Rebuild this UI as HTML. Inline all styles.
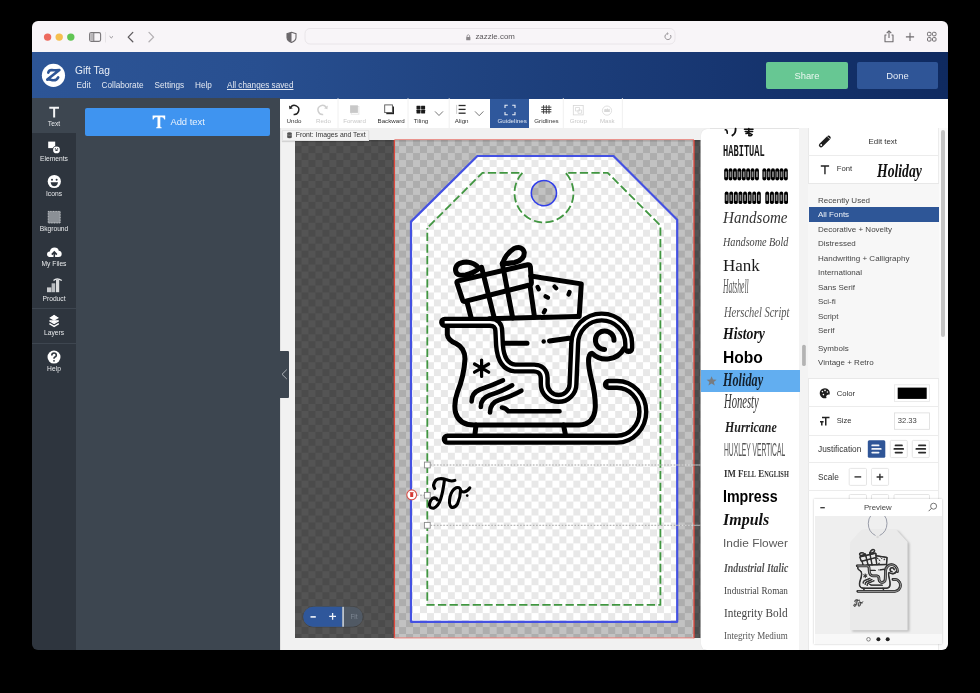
<!DOCTYPE html>
<html><head><meta charset="utf-8">
<style>
*{margin:0;padding:0;box-sizing:border-box}
html,body{width:980px;height:693px;overflow:hidden;background:#000;font-family:"Liberation Sans",sans-serif}
.a{position:absolute}
#win{position:absolute;left:0;top:0;width:980px;height:693px;clip-path:inset(21px 32px 43px 32px round 6px);background:#fff;will-change:transform}
.t{position:absolute;white-space:nowrap;line-height:1}
.sl{color:#e8eaec;font-size:6.7px;text-align:center;width:44px;left:32px}
.tbl{position:absolute;font-size:6.2px;color:#333;text-align:center;white-space:nowrap;line-height:1}
.dis{color:#c8c8c8}
.fi{position:absolute;left:723px;white-space:nowrap;color:#111;line-height:1}
.cat{position:absolute;left:818px;font-size:8px;color:#454545;white-space:nowrap;line-height:1}
</style></head><body>
<div id="win">
  <!-- title bar -->
  <div class="a" style="left:32px;top:21px;width:916px;height:31px;background:#f8f5f8"></div>

  <!-- titlebar contents -->
  <svg class="a" style="left:0;top:0" width="980" height="60" viewBox="0 0 980 60">
    <circle cx="47.6" cy="37.1" r="3.7" fill="#ed6a5e"/>
    <circle cx="59.2" cy="37.1" r="3.7" fill="#f5bf4f"/>
    <circle cx="70.8" cy="37.1" r="3.7" fill="#61c554"/>
    <rect x="89.6" y="32.6" width="11" height="8.8" rx="1.6" fill="none" stroke="#7a777a" stroke-width="1.1"/>
    <rect x="90.2" y="33.2" width="3.2" height="7.6" fill="#b9b6b9"/>
    <line x1="93.8" y1="32.6" x2="93.8" y2="41.4" stroke="#7a777a" stroke-width="1"/>
    <line x1="105.5" y1="32" x2="105.5" y2="42.5" stroke="#e2dfe2" stroke-width="0.8"/>
    <path d="M109.6 36.3 L111.3 37.9 L113 36.3" fill="none" stroke="#8a878a" stroke-width="0.9"/>
    <path d="M132.8 32.4 L128.2 37.1 L132.8 41.8" fill="none" stroke="#5e5b5e" stroke-width="1.3" stroke-linecap="round" stroke-linejoin="round"/>
    <path d="M149 32.4 L153.6 37.1 L149 41.8" fill="none" stroke="#b3b0b3" stroke-width="1.3" stroke-linecap="round" stroke-linejoin="round"/>
    <path d="M291.5 32.3 L296 33.7 L296 37.5 Q296 40.8 291.5 42.5 Q287 40.8 287 37.5 L287 33.7 Z" fill="none" stroke="#6c696c" stroke-width="1.1"/>
    <path d="M291.5 32.3 L287 33.7 L287 37.5 Q287 40.8 291.5 42.5 Z" fill="#6c696c"/>
    <rect x="305" y="28.5" width="370" height="15.5" rx="5" fill="#f8f5f8" stroke="#e4e1e4" stroke-width="0.8"/>
    <rect x="466.2" y="37" width="4.2" height="3.2" rx="0.5" fill="#8a878a"/>
    <path d="M467 37 L467 35.6 Q468.3 33.8 469.6 35.6 L469.6 37" fill="none" stroke="#8a878a" stroke-width="0.8"/>
    <path d="M670.5 35 A3 3 0 1 1 667.6 33.6" fill="none" stroke="#8a878a" stroke-width="0.9"/>
    <path d="M667 32.6 L668.2 33.6 L667 34.8" fill="none" stroke="#8a878a" stroke-width="0.8"/>
    <path d="M886.5 35 L885 35 L885 41.8 L893 41.8 L893 35 L891.5 35" fill="none" stroke="#6e6b6e" stroke-width="1.1" stroke-linejoin="round"/>
    <line x1="889" y1="31" x2="889" y2="38" stroke="#6e6b6e" stroke-width="1.1"/>
    <path d="M886.7 33.2 L889 30.9 L891.3 33.2" fill="none" stroke="#6e6b6e" stroke-width="1.1" stroke-linejoin="round"/>
    <path d="M905.9 36.9 H914.1 M910 32.8 V41" stroke="#6e6b6e" stroke-width="1.1"/>
    <rect x="927.5" y="32.3" width="3.5" height="3.5" rx="1" fill="none" stroke="#6e6b6e" stroke-width="1"/>
    <rect x="932.5" y="32.3" width="3.5" height="3.5" rx="1" fill="none" stroke="#6e6b6e" stroke-width="1"/>
    <rect x="927.5" y="37.6" width="3.5" height="3.5" rx="1" fill="none" stroke="#6e6b6e" stroke-width="1"/>
    <rect x="932.5" y="37.6" width="3.5" height="3.5" rx="1" fill="none" stroke="#6e6b6e" stroke-width="1"/>
  </svg>
  <div class="t" style="left:475.4px;top:33.2px;font-size:7.9px;color:#5a575a">zazzle.com</div>
  <!-- header -->
  <div class="a" style="left:32px;top:52px;width:916px;height:47px;background:linear-gradient(90deg,#2d5596 0%,#284f90 25%,#1f427f 50%,#173671 75%,#0f2a60 100%)"></div>

  <!-- header contents -->
  <svg class="a" style="left:0;top:0" width="100" height="100" viewBox="0 0 100 100">
    <circle cx="53.45" cy="75.35" r="11.6" fill="#fff"/>
    <path d="M48.3 72.6 Q48.6 70.2 51.8 70 Q55 70.3 59.4 70.1 L47.3 79.6 Q50 79.2 52.5 80.2 Q56.5 80.8 58.2 77.4" fill="none" stroke="#2d5596" stroke-width="2.6" stroke-linecap="round" stroke-linejoin="round"/>
  </svg>
  <div class="t" style="left:75px;top:65.5px;font-size:10.2px;color:#e9eef6">Gift Tag</div>
  <div class="t" style="left:76.6px;top:82px;font-size:8.2px;color:#e4e9f2">Edit</div>
  <div class="t" style="left:101.6px;top:82px;font-size:8.2px;color:#e4e9f2">Collaborate</div>
  <div class="t" style="left:154.6px;top:82px;font-size:8.2px;color:#e4e9f2">Settings</div>
  <div class="t" style="left:195px;top:82px;font-size:8.2px;color:#e4e9f2">Help</div>
  <div class="t" style="left:227px;top:82px;font-size:8.2px;color:#e4e9f2;text-decoration:underline">All changes saved</div>
  <div class="a" style="left:766.3px;top:61.6px;width:81.3px;height:27.7px;background:#67c793;border-radius:2px"></div>
  <div class="t" style="left:766.3px;top:70.5px;width:81.3px;text-align:center;font-size:9.4px;color:#eaf7ef">Share</div>
  <div class="a" style="left:857px;top:61.6px;width:81px;height:27.7px;background:#2f5597;border-radius:2px"></div>
  <div class="t" style="left:857px;top:70.5px;width:81px;text-align:center;font-size:9.4px;color:#e6ecf5">Done</div>
  <!-- sidebar -->
  <div class="a" style="left:32px;top:98px;width:44px;height:552px;background:#2e353e"></div>
  <div class="a" style="left:32px;top:98px;width:44px;height:35px;background:#3d4650"></div>
  <div class="a" style="left:32px;top:308px;width:44px;height:1px;background:#3e4650"></div>
  <div class="a" style="left:32px;top:343px;width:44px;height:1px;background:#3e4650"></div>
  <!-- left panel -->
  <div class="a" style="left:76px;top:98px;width:204px;height:552px;background:#3d4650"></div>

  <!-- sidebar icons -->
  <svg class="a" style="left:0;top:0" width="80" height="380" viewBox="0 0 80 380">
    <path d="M49.3 107.7 H59 M54.15 107.7 V117.5" stroke="#f4f5f6" stroke-width="2" fill="none"/>
    <rect x="48.2" y="141.6" width="7" height="6.5" fill="#fff"/>
    <circle cx="56.5" cy="149.9" r="4.2" fill="#2e353e"/>
    <circle cx="56.5" cy="149.9" r="3.4" fill="#fff"/>
    <path d="M54.6 149.6 Q56.5 152.6 58.4 149.6 Z" fill="#2e353e"/>
    <circle cx="55.3" cy="148.6" r="0.5" fill="#2e353e"/><circle cx="57.7" cy="148.6" r="0.5" fill="#2e353e"/>
    <circle cx="54.3" cy="181.5" r="6.6" fill="#fff"/>
    <circle cx="52" cy="179.8" r="1" fill="#2e353e"/><circle cx="56.6" cy="179.8" r="1" fill="#2e353e"/>
    <path d="M50.6 182.2 H58 Q57.4 186.3 54.3 186.3 Q51.2 186.3 50.6 182.2 Z" fill="#2e353e"/>
    <rect x="48.2" y="211.4" width="12" height="11.6" fill="#8b9096" stroke="#d6d8da" stroke-width="0.8" stroke-dasharray="1 0.6"/>
    <path d="M50.5 257 Q47 257 47 254.2 Q47 251.6 49.8 251.4 Q50.6 247.6 54.6 247.6 Q58 247.6 58.8 250.8 Q61.7 251 61.7 254 Q61.7 257 58.6 257 Z" fill="#fff"/>
    <path d="M54.3 257.5 V252.3 M51.8 254.6 L54.3 252 L56.8 254.6" stroke="#2e353e" stroke-width="1.6" fill="none"/>
    <path d="M53.5 280.5 Q57 277.6 61.8 280.5" stroke="#e6e8ea" stroke-width="1.4" fill="none"/>
    <rect x="56" y="280" width="3.2" height="12.2" fill="#d8dadc"/>
    <rect x="51.6" y="283.3" width="3.6" height="8.9" fill="#b8bcc0"/>
    <rect x="47" y="287.4" width="4.4" height="4.8" fill="#c8cbce"/>
    <path d="M49.4 318 L58.8 318 L54.1 314.8 Z M49.2 320.3 L54.1 323.2 L59 320.3" fill="#fff"/>
    <path d="M49.4 318 L54.1 315.2 L58.8 318 L54.1 320.8 Z" fill="#fff"/>
    <path d="M49.4 320.8 L54.1 323.6 L58.8 320.8" stroke="#fff" stroke-width="1.3" fill="none"/>
    <path d="M49.4 323.6 L54.1 326.4 L58.8 323.6" stroke="#fff" stroke-width="1.3" fill="none"/>
    <circle cx="54" cy="357.1" r="6.5" fill="#fff"/>
    <path d="M51.8 355.5 Q51.8 353 54 353 Q56.3 353 56.3 355.2 Q56.3 356.7 54.6 357.3 Q54 357.6 54 358.8" stroke="#2e353e" stroke-width="1.6" fill="none"/>
    <circle cx="54" cy="360.8" r="0.9" fill="#2e353e"/>
  </svg>
  <div class="t sl" style="top:121px">Text</div>
  <div class="t sl" style="top:156px">Elements</div>
  <div class="t sl" style="top:190.6px">Icons</div>
  <div class="t sl" style="top:225.5px">Bkground</div>
  <div class="t sl" style="top:260.6px">My Files</div>
  <div class="t sl" style="top:295.6px">Product</div>
  <div class="t sl" style="top:330.2px">Layers</div>
  <div class="t sl" style="top:365.5px">Help</div>
  <!-- add text button -->
  <div class="a" style="left:85.4px;top:108px;width:185px;height:27.8px;background:#3f94f0;border-radius:2px"></div>
  <svg class="a" style="left:0;top:0" width="300" height="140" viewBox="0 0 300 140">
    <path d="M152.6 115.6 H165.2 V119.4 H164.2 Q163.8 117.3 161.8 117.3 H160.3 V126.4 Q160.3 127.2 161.6 127.3 V128.3 H156.2 V127.3 Q157.5 127.2 157.5 126.4 V117.3 H156 Q154 117.3 153.6 119.4 H152.6 Z" fill="#fff"/>
  </svg>
  <div class="t" style="left:170.4px;top:117px;font-size:9.4px;color:#eaf3fd">Add text</div>
  <!-- toolbar -->
  <div class="a" style="left:280px;top:98.5px;width:668px;height:30px;background:#fff;border-bottom:1px solid #e6e6e6"></div>

  <!-- toolbar contents -->
  <div class="a" style="left:490px;top:98.5px;width:39px;height:29.3px;background:#2f589c"></div>
  <svg class="a" style="left:0;top:0" width="700" height="130" viewBox="0 0 700 130">
    <g stroke="#ececec" stroke-width="0.8"><line x1="338" y1="98" x2="338" y2="128"/><line x1="408" y1="98" x2="408" y2="128"/><line x1="449.2" y1="98" x2="449.2" y2="128"/><line x1="563.3" y1="98" x2="563.3" y2="128"/><line x1="622.4" y1="98" x2="622.4" y2="128"/></g>
    <path d="M290.6 107.4 A4.5 4.5 0 1 1 293.6 114.4" fill="none" stroke="#222" stroke-width="1.5"/>
    <path d="M289 105.6 L289.4 109.2 L292.8 108.2 Z" fill="#222"/>
    <path d="M326.2 107.4 A4.5 4.5 0 1 0 323.2 114.4" fill="none" stroke="#cfcfcf" stroke-width="1.5"/>
    <path d="M327.8 105.6 L327.4 109.2 L324 108.2 Z" fill="#cfcfcf"/>
    <rect x="351.2" y="106.5" width="7.7" height="7.7" fill="none" stroke="#e4e4e4" stroke-width="0.9"/>
    <rect x="350.1" y="105.3" width="7.8" height="7.6" fill="#c8c8c8"/>
    <rect x="386.3" y="106.5" width="7.7" height="7.7" fill="#222"/>
    <rect x="384.7" y="104.9" width="7.7" height="7.7" fill="#fff" stroke="#555" stroke-width="0.9"/>
    <rect x="416.5" y="105.7" width="4" height="3.7" rx="0.4" fill="#1a1a1a"/><rect x="421.1" y="105.7" width="4" height="3.7" rx="0.4" fill="#1a1a1a"/>
    <rect x="416.5" y="109.8" width="4" height="3.7" rx="0.4" fill="#1a1a1a"/><rect x="421.1" y="109.8" width="4" height="3.7" rx="0.4" fill="#1a1a1a"/>
    <path d="M435 111.4 L439 115.5 L443 111.4" fill="none" stroke="#666" stroke-width="0.9"/>
    <line x1="456.6" y1="104.9" x2="456.6" y2="113.9" stroke="#bbb" stroke-width="0.7"/>
    <g stroke="#2a2a2a" stroke-width="1.3"><line x1="458.6" y1="105.5" x2="465.6" y2="105.5"/><line x1="458.6" y1="109.4" x2="465.6" y2="109.4"/><line x1="458.6" y1="113.2" x2="465.6" y2="113.2"/></g>
    <path d="M475 111.4 L479.2 115.7 L483.4 111.4" fill="none" stroke="#666" stroke-width="0.9"/>
    <path d="M505 108 V105.2 H507.8 M512.2 105.2 H515 V108 M515 112 V114.8 H512.2 M507.8 114.8 H505 V112" fill="none" stroke="#e9eef6" stroke-width="1.1"/>
    <g stroke="#333" stroke-width="0.9"><line x1="543.6" y1="105.1" x2="543.6" y2="113.8"/><line x1="546.3" y1="105.1" x2="546.3" y2="113.8"/><line x1="549" y1="105.1" x2="549" y2="113.8"/><line x1="541.2" y1="107.2" x2="551.4" y2="107.2"/><line x1="541.2" y1="109.5" x2="551.4" y2="109.5"/><line x1="541.2" y1="111.8" x2="551.4" y2="111.8"/></g>
    <rect x="573.3" y="105.5" width="9.9" height="9.4" fill="none" stroke="#d6d6d6" stroke-width="0.8"/>
    <path d="M575.5 107.5 H579.5 V111 H575.5 Z M578 110 H581.5 V113.3 H578 Z" fill="none" stroke="#d6d6d6" stroke-width="0.7"/>
    <circle cx="607" cy="110.6" r="4.6" fill="none" stroke="#d8d8d8" stroke-width="0.8"/>
    <path d="M604.2 112 V109.6 L605.3 108.7 L606.2 109.6 L607.3 108.3 L608.6 109.6 L609.8 108.8 V112 Z" fill="#d8d8d8"/>
  </svg>
  <div class="tbl" style="left:282px;top:118px;width:24px">Undo</div>
  <div class="tbl dis" style="left:311.5px;top:118px;width:24px">Redo</div>
  <div class="tbl dis" style="left:342.5px;top:118px;width:24px">Forward</div>
  <div class="tbl" style="left:377.5px;top:118px;width:24px">Backward</div>
  <div class="tbl" style="left:409px;top:118px;width:24px">Tiling</div>
  <div class="tbl" style="left:449.7px;top:118px;width:24px">Align</div>
  <div class="tbl" style="left:497.5px;top:118px;width:24px;color:#e6ecf5">Guidelines</div>
  <div class="tbl" style="left:534.3px;top:118px;width:24px">Gridlines</div>
  <div class="tbl dis" style="left:566.3px;top:118px;width:24px">Group</div>
  <div class="tbl dis" style="left:595.3px;top:118px;width:24px">Mask</div>
  <!-- gray strip around canvas -->
  <div class="a" style="left:280px;top:128px;width:430px;height:522px;background:#f1f1f1"></div>
  <div class="a" style="left:280px;top:128px;width:1px;height:522px;background:#e2e2e2"></div>

  <!-- canvas -->
  <svg class="a" style="left:0;top:0" width="980" height="693" viewBox="0 0 980 693">
    <defs>
      <pattern id="ckd" x="1.81" y="-0.27" width="13.94" height="13.94" patternUnits="userSpaceOnUse"><rect width="13.94" height="13.94" fill="#545454"/><rect x="6.97" width="6.97" height="6.97" fill="#4b4b4b"/><rect y="6.97" width="6.97" height="6.97" fill="#4b4b4b"/></pattern>
      <pattern id="ckm" x="1.81" y="-0.27" width="13.94" height="13.94" patternUnits="userSpaceOnUse"><rect width="13.94" height="13.94" fill="#c2c2c2"/><rect x="6.97" width="6.97" height="6.97" fill="#adadad"/><rect y="6.97" width="6.97" height="6.97" fill="#adadad"/></pattern>
      <pattern id="ckl" x="1.81" y="-0.27" width="13.94" height="13.94" patternUnits="userSpaceOnUse"><rect width="13.94" height="13.94" fill="#ffffff"/><rect x="6.97" width="6.97" height="6.97" fill="#e8e8e8"/><rect y="6.97" width="6.97" height="6.97" fill="#e8e8e8"/></pattern>
    </defs>
    <rect x="295" y="140" width="405.5" height="498" fill="url(#ckd)"/>
    <rect x="394.4" y="140" width="299.6" height="498" fill="url(#ckm)"/>
    <rect x="295" y="140" width="405.5" height="1.6" fill="#000" opacity="0.13"/>
    <path d="M394.4 140 V638.2 M694 140 V638.2" fill="none" stroke="#e0483c" stroke-width="1.3"/>
    <line x1="394.4" y1="637.9" x2="694" y2="637.9" stroke="#e8837c" stroke-width="1"/>
    <line x1="394.4" y1="139.6" x2="694" y2="139.6" stroke="#e88a84" stroke-width="1"/>
    <polygon points="477.4,156 613.5,156 677.2,219.7 677.2,621.8 411,621.8 411,221.6" fill="url(#ckl)" stroke="#4451e2" stroke-width="2.2" stroke-linejoin="round"/>
    <circle cx="543.9" cy="193.1" r="12.6" fill="url(#ckm)" stroke="#3340e8" stroke-width="1.6"/>
    <path d="M427.3 227.9 L482.4 172.8 H522.5 A29.5 29.5 0 1 0 565.5 172.8 H607.7 L660.4 225.5 V604.9 H427.3 Z" fill="none" stroke="#419641" stroke-width="1.8" stroke-dasharray="8.3 3.3" stroke-dashoffset="-2.2"/>
    <g id="art">
    <!-- sleigh -->
    <g fill="none" stroke="#000" stroke-width="5" stroke-linecap="round" stroke-linejoin="round">
      <!-- second box -->
      <path d="M530.8 276 L581.3 283.9 L579.2 316.4"/>
      <!-- gift lid -->
      <path d="M458.4 280.9 L527.7 264.7 Q530 264.5 530.4 267 L531.4 282.5 Q531.5 284.5 529.5 285 L465 301.3 Q463 301.7 462.5 299.7 L457 283 Q456.5 281.3 458.4 280.9 Z" fill="#fff" fill-opacity="0"/>
      <path d="M467 302 L471.2 318 M530 285.5 L534.5 317 M481.6 267.3 L494.5 319 M502.3 263.4 L512.7 318"/>
      <!-- bow -->
      <path d="M479 268.5 Q475 262.5 466.5 262 Q455.5 262.5 455.5 270 Q456 276.5 465.5 275 Q473 273.5 479 268.5"/>
      <path d="M502.3 264 Q505.5 254 514 248.5 Q522.5 245.5 524.3 252.5 Q524.5 260 514.5 262.5 Q508 263.5 502.3 264"/>
      <!-- dots -->
      <path d="M537.6 287 L538.7 289.3 M554.6 286.6 L556.2 288.3 M569.5 292 L568.6 294.5 M545.6 296.3 L547.9 297.6 M545 310.2 L543.9 312.4" stroke-width="4.3"/>
      <!-- rim line -->
      <path d="M489 318.8 L577.7 316.4"/>
      <!-- body outline -->
      <path d="M447.3 327 V334.5 Q447.8 340 456 343.5 Q465 348 465 359 Q464 376 457.5 392 Q453.5 403 455.5 412.5 Q459 425 474 425 H579 Q594.5 424.5 595.3 407 Q595.5 395 591.6 380 Q587.6 364 588.8 357.5 Q589.8 353.2 592 353.2 A20.3 20.3 0 0 0 624 348.5"/>
      <!-- legs -->
      <path d="M476 425 L475 434 M563.5 425 L565.3 434"/>
      <!-- curl -->
      <path d="M614 340.2 A9.3 9.3 0 1 0 604.6 349.5"/>
      <!-- dash + dot -->
      <path d="M503.9 343.3 H527 M549.5 341 L569 338.2"/>
      <circle cx="543.7" cy="341.5" r="2.2" fill="#000" stroke="none"/>
      <!-- asterisk -->
      <path d="M481.6 360 V376.4 M474.5 364 L488.7 372.2 M474.5 372.2 L488.7 364" stroke-width="3.2"/>
      <!-- swooshes -->
      <path d="M471.6 401.5 Q471.5 393 480 389.5 Q492 385.5 503 380.4 M480.8 407 Q480.5 398.5 490 395 Q503 391 512.2 385.3 M490 412.4 Q490 403 499 400 Q512 396 521.4 390.7" stroke-width="4.6"/>
      <!-- bottom inner line -->
      <path d="M502 407.5 Q506 408 508.4 411.3 H559.5" stroke-width="4.6"/>
    </g>
    <g fill="none" stroke-linecap="round" stroke-linejoin="round">
      <path id="runner" d="M447.3 439.2 H617 A25.8 27.4 0 0 0 642.8 411.8 A25.8 27.4 0 0 0 617 384.4 H608.5" stroke="#000" stroke-width="11.2"/>
      <path d="M447.3 439.2 H617 A25.8 27.4 0 0 0 642.8 411.8 A25.8 27.4 0 0 0 617 384.4 H608.5" stroke="#fff" stroke-width="2.4" stroke-linecap="butt"/>
      <path d="M444.7 322.3 H490 Q498.5 322.3 498.8 331 L499.5 345 Q501 366.5 515 368 H534 Q543.8 368.5 544.2 378 V384 A14.4 14.4 0 0 0 573 384 L574.7 344 A27 27 0 0 1 628.7 344 V348.5" stroke="#000" stroke-width="11.2"/>
      <path d="M444.7 322.3 H490 Q498.5 322.3 498.8 331 L499.5 345 Q501 366.5 515 368 H534 Q543.8 368.5 544.2 378 V384 A14.4 14.4 0 0 0 573 384 L574.7 344 A27 27 0 0 1 628.7 344 V348.5" stroke="#fff" stroke-width="2.4" stroke-linecap="butt"/>
    </g>

    <g fill="none" stroke="#000" stroke-width="3.1" stroke-linecap="round" stroke-linejoin="round">
      <path d="M434.7 488.5 Q432 485 436 480 Q440 477.5 446.4 479.7 Q451 481.8 454.9 480.4"/>
      <path d="M444.5 479.5 Q443 492 440.6 499.2 Q438.5 506 433.4 508.3 Q429 508.5 429.5 504 Q430.5 498.5 434.1 497.9 Q436.5 498 437.3 499.9"/>
      <path d="M460.6 490 Q459.5 486.5 456 487.8 Q451.5 490 450 497 Q448.5 504 451 507 Q454.5 508.5 457.5 503.8 Q460.5 497 460.6 490 Q461 491.8 464 492 Q467.5 491.5 469.8 487.9"/>
    </g>
    <circle cx="467.2" cy="495.6" r="1.3" fill="#000"/>
    </g>
    <!-- text box selection -->
    <g stroke="#f4f4f4" stroke-width="0.9" fill="none" opacity="0.7"><line x1="430.5" y1="465" x2="701" y2="465"/><line x1="430.5" y1="525.3" x2="701" y2="525.3"/></g>
    <g stroke="#9a9a9a" stroke-width="0.9" stroke-dasharray="1.6 1.6" fill="none">
      <line x1="430.5" y1="465" x2="701" y2="465"/>
      <line x1="430.5" y1="525.3" x2="701" y2="525.3"/>
      <line x1="417" y1="495.2" x2="424.5" y2="495.2"/>
    </g>
    <g fill="#fff" stroke="#8a8a8a" stroke-width="0.9">
      <rect x="424.4" y="462.1" width="5.8" height="5.8"/>
      <rect x="424.4" y="492.4" width="5.8" height="5.8"/>
      <rect x="424.4" y="522.4" width="5.8" height="5.8"/>
    </g>
    <circle cx="411.7" cy="494.8" r="4.9" fill="#fff" stroke="#d9504a" stroke-width="1.1"/>
    <rect x="410.2" y="492.9" width="3" height="4" rx="0.5" fill="#d43a33"/>
    <rect x="409.8" y="492.2" width="3.8" height="0.8" fill="#d43a33"/>
    <!-- zoom control -->
    <rect x="302.7" y="606.5" width="60.6" height="21" rx="10.5" fill="#000" opacity="0.15"/><rect x="303.2" y="606.8" width="59.6" height="20" rx="10" fill="#525c68" opacity="0.9"/>
    <path d="M313.2 606.8 H342.3 V626.8 H313.2 A10 10 0 0 1 313.2 606.8 Z" fill="#2f579b"/>
    <rect x="342.3" y="606.8" width="1.6" height="20" fill="#c8cfd8"/>
    <path d="M310.5 616.9 H315.8" stroke="#f2f5fa" stroke-width="1.6"/>
    <path d="M329.2 616.4 H336 M332.6 613 V619.8" stroke="#f2f5fa" stroke-width="1.3"/>
  </svg>
  <div class="t" style="left:350.4px;top:613.5px;font-size:6.5px;color:#7d8692">Fit</div>
  <!-- front label -->
  <div class="a" style="left:282px;top:129.7px;width:86.8px;height:11.2px;background:#f3f3f3;border:1px solid #e3e3e3;box-shadow:0 1px 1px rgba(0,0,0,0.12)"></div>
  <svg class="a" style="left:0;top:0" width="300" height="150" viewBox="0 0 300 150">
    <ellipse cx="289.5" cy="133.2" rx="2.3" ry="1" fill="#555"/>
    <rect x="287.2" y="133.2" width="4.6" height="4" fill="#555"/>
    <ellipse cx="289.5" cy="137.2" rx="2.3" ry="1" fill="#555"/>
    <path d="M287.2 134.8 Q289.5 136 291.8 134.8" stroke="#bbb" stroke-width="0.4" fill="none"/>
  </svg>
  <div class="t" style="left:295.8px;top:131.8px;font-size:6.85px;color:#333">Front: Images and Text</div>

  <div class="a" style="left:279px;top:351.3px;width:10px;height:46.4px;background:#3d4650;border-radius:0 1px 1px 0"></div>
  <svg class="a" style="left:0;top:0" width="300" height="400" viewBox="0 0 300 400"><path d="M286.8 369.6 L282 374.3 L286.8 379" fill="none" stroke="#b5bac0" stroke-width="0.9"/></svg>
  <!-- font list panel -->
  <div class="a" style="left:701px;top:128.5px;width:98px;height:521.5px;background:#fff;border-radius:6px 0 0 6px;box-shadow:0 0 1px rgba(0,0,0,0.15)"></div>
  <div class="a" style="left:799px;top:128px;width:9px;height:522px;background:#f3f3f3"></div>

  <!-- font list contents -->
  <div class="a" style="left:701px;top:369.6px;width:98.5px;height:22.8px;background:#62aef0"></div>
  <svg class="a" style="left:0;top:0" width="980" height="693" viewBox="0 0 980 693">
    <path d="M711.6 376.2 L713 379.6 L716.6 379.8 L713.8 382.1 L714.8 385.6 L711.6 383.6 L708.4 385.6 L709.4 382.1 L706.6 379.8 L710.2 379.6 Z" fill="#787c80"/>
    <rect x="802.1" y="344.7" width="3.7" height="21.4" rx="1.85" fill="#b3b3b3"/>
    <g fill="none" stroke="#111" stroke-width="1.6" stroke-linecap="round">
      <path d="M725.3 129.8 Q726.8 129.6 727 131.5 L727.3 133.2"/>
      <path d="M735.6 128.6 Q735.8 133.5 732.4 135.4" stroke-width="1.9"/>
      <path d="M744.5 129.2 H753 M745.3 131.5 H752.6 M748.8 128.5 V135.6 M746 133.4 Q749 132.5 752 134.6 Q751.2 136 749.5 135.6"/>
    </g>
    <rect x="724.20" y="168.3" width="3.9" height="12.1" rx="1.95" fill="#000"/>
    <rect x="725.30" y="171.5" width="1.7" height="5.7" fill="#8a8a8a"/>
    <rect x="728.60" y="168.3" width="3.9" height="12.1" rx="1.95" fill="#000"/>
    <rect x="729.70" y="171.5" width="1.7" height="5.7" fill="#8a8a8a"/>
    <rect x="733.00" y="168.3" width="3.9" height="12.1" rx="1.95" fill="#000"/>
    <rect x="734.10" y="171.5" width="1.7" height="5.7" fill="#8a8a8a"/>
    <rect x="737.40" y="168.3" width="3.9" height="12.1" rx="1.95" fill="#000"/>
    <rect x="738.50" y="171.5" width="1.7" height="5.7" fill="#8a8a8a"/>
    <rect x="741.80" y="168.3" width="3.9" height="12.1" rx="1.95" fill="#000"/>
    <rect x="742.90" y="171.5" width="1.7" height="5.7" fill="#8a8a8a"/>
    <rect x="746.20" y="168.3" width="3.9" height="12.1" rx="1.95" fill="#000"/>
    <rect x="747.30" y="171.5" width="1.7" height="5.7" fill="#8a8a8a"/>
    <rect x="750.60" y="168.3" width="3.9" height="12.1" rx="1.95" fill="#000"/>
    <rect x="751.70" y="171.5" width="1.7" height="5.7" fill="#8a8a8a"/>
    <rect x="755.00" y="168.3" width="3.9" height="12.1" rx="1.95" fill="#000"/>
    <rect x="756.10" y="171.5" width="1.7" height="5.7" fill="#8a8a8a"/>
    <rect x="762.40" y="168.3" width="3.9" height="12.1" rx="1.95" fill="#000"/>
    <rect x="763.50" y="171.5" width="1.7" height="5.7" fill="#8a8a8a"/>
    <rect x="766.70" y="168.3" width="3.9" height="12.1" rx="1.95" fill="#000"/>
    <rect x="767.80" y="171.5" width="1.7" height="5.7" fill="#8a8a8a"/>
    <rect x="771.00" y="168.3" width="3.9" height="12.1" rx="1.95" fill="#000"/>
    <rect x="772.10" y="171.5" width="1.7" height="5.7" fill="#8a8a8a"/>
    <rect x="775.30" y="168.3" width="3.9" height="12.1" rx="1.95" fill="#000"/>
    <rect x="776.40" y="171.5" width="1.7" height="5.7" fill="#8a8a8a"/>
    <rect x="779.60" y="168.3" width="3.9" height="12.1" rx="1.95" fill="#000"/>
    <rect x="780.70" y="171.5" width="1.7" height="5.7" fill="#8a8a8a"/>
    <rect x="783.90" y="168.3" width="3.9" height="12.1" rx="1.95" fill="#000"/>
    <rect x="785.00" y="171.5" width="1.7" height="5.7" fill="#8a8a8a"/>
    <rect x="724.70" y="191.5" width="3.9" height="12.6" rx="1.95" fill="#000"/>
    <rect x="725.80" y="194.7" width="1.7" height="6.2" fill="#8a8a8a"/>
    <rect x="729.30" y="191.5" width="3.9" height="12.6" rx="1.95" fill="#000"/>
    <rect x="730.40" y="194.7" width="1.7" height="6.2" fill="#8a8a8a"/>
    <rect x="733.90" y="191.5" width="3.9" height="12.6" rx="1.95" fill="#000"/>
    <rect x="735.00" y="194.7" width="1.7" height="6.2" fill="#8a8a8a"/>
    <rect x="738.50" y="191.5" width="3.9" height="12.6" rx="1.95" fill="#000"/>
    <rect x="739.60" y="194.7" width="1.7" height="6.2" fill="#8a8a8a"/>
    <rect x="743.10" y="191.5" width="3.9" height="12.6" rx="1.95" fill="#000"/>
    <rect x="744.20" y="194.7" width="1.7" height="6.2" fill="#8a8a8a"/>
    <rect x="747.70" y="191.5" width="3.9" height="12.6" rx="1.95" fill="#000"/>
    <rect x="748.80" y="194.7" width="1.7" height="6.2" fill="#8a8a8a"/>
    <rect x="752.30" y="191.5" width="3.9" height="12.6" rx="1.95" fill="#000"/>
    <rect x="753.40" y="194.7" width="1.7" height="6.2" fill="#8a8a8a"/>
    <rect x="756.90" y="191.5" width="3.9" height="12.6" rx="1.95" fill="#000"/>
    <rect x="758.00" y="194.7" width="1.7" height="6.2" fill="#8a8a8a"/>
    <rect x="765.30" y="191.5" width="3.9" height="12.6" rx="1.95" fill="#000"/>
    <rect x="766.40" y="194.7" width="1.7" height="6.2" fill="#8a8a8a"/>
    <rect x="770.00" y="191.5" width="3.9" height="12.6" rx="1.95" fill="#000"/>
    <rect x="771.10" y="194.7" width="1.7" height="6.2" fill="#8a8a8a"/>
    <rect x="774.70" y="191.5" width="3.9" height="12.6" rx="1.95" fill="#000"/>
    <rect x="775.80" y="194.7" width="1.7" height="6.2" fill="#8a8a8a"/>
    <rect x="779.40" y="191.5" width="3.9" height="12.6" rx="1.95" fill="#000"/>
    <rect x="780.50" y="194.7" width="1.7" height="6.2" fill="#8a8a8a"/>
    <rect x="784.10" y="191.5" width="3.9" height="12.6" rx="1.95" fill="#000"/>
    <rect x="785.20" y="194.7" width="1.7" height="6.2" fill="#8a8a8a"/>
  </svg>
<div class="fi" style="left:723.09px;top:143.79px;font:bold 16.12px 'Liberation Mono';line-height:1;color:#1a1a1a;transform:scaleX(0.540);transform-origin:0 0">HABITUAL</div>
<div class="fi" style="left:723.35px;top:209.98px;font:italic 16.57px 'Liberation Serif';line-height:1;color:#333;transform:scaleX(0.911);transform-origin:0 0">Handsome</div>
<div class="fi" style="left:723.20px;top:235.66px;font:italic 12.43px 'Liberation Serif';line-height:1;color:#444;transform:scaleX(0.820);transform-origin:0 0">Handsome Bold</div>
<div class="fi" style="left:722.59px;top:256.62px;font:17.71px 'Liberation Serif';line-height:1;color:#1a1a1a;transform:scaleX(0.962);transform-origin:0 0">Hank</div>
<div class="fi" style="left:723.08px;top:275.58px;font:italic 21.57px 'Liberation Serif';line-height:1;color:#555;transform:scaleX(0.351);transform-origin:0 0">Hatshell</div>
<div class="fi" style="left:723.80px;top:304.14px;font:italic 15.44px 'Liberation Serif';line-height:1;color:#555;transform:scaleX(0.679);transform-origin:0 0">Herschel Script</div>
<div class="fi" style="left:723.34px;top:324.67px;font:italic bold 17.33px 'Liberation Serif';line-height:1;color:#111;transform:scaleX(0.791);transform-origin:0 0">History</div>
<div class="fi" style="left:723.01px;top:349.46px;font:bold 17.03px 'Liberation Sans';line-height:1;color:#000;transform:scaleX(0.916);transform-origin:0 0">Hobo</div>
<div class="fi" style="left:723.32px;top:372.40px;font:italic bold 17.89px 'Liberation Serif';line-height:1;color:#14202c;transform:scaleX(0.684);transform-origin:0 0">Holiday</div>
<div class="fi" style="left:723.81px;top:391.49px;font:italic 21.74px 'Liberation Serif';line-height:1;color:#333;transform:scaleX(0.488);transform-origin:0 0">Honesty</div>
<div class="fi" style="left:724.52px;top:418.76px;font:italic bold 15.29px 'Liberation Serif';line-height:1;color:#222;transform:scaleX(0.781);transform-origin:0 0">Hurricane</div>
<div class="fi" style="left:723.86px;top:440.87px;font:18.87px 'Liberation Sans';line-height:1;color:#555;transform:scaleX(0.355);transform-origin:0 0">HUXLEY VERTICAL</div>
<div class="fi" style="left:724.13px;top:467.88px;font:small-caps bold 11.23px 'Liberation Serif';line-height:1;color:#333;transform:scaleX(0.790);transform-origin:0 0">IM Fell English</div>
<div class="fi" style="left:723.20px;top:489.39px;font:bold 15.67px 'Liberation Sans';line-height:1;color:#000;transform:scaleX(0.909);transform-origin:0 0">Impress</div>
<div class="fi" style="left:722.96px;top:512.18px;font:italic bold 16.56px 'Liberation Serif';line-height:1;color:#111;transform:scaleX(0.966);transform-origin:0 0">Impuls</div>
<div class="fi" style="left:723.13px;top:537.92px;font:11.49px 'Liberation Sans';line-height:1;color:#5a5a5a;transform:scaleX(1.037);transform-origin:0 0">Indie Flower</div>
<div class="fi" style="left:723.60px;top:561.60px;font:italic bold 12.14px 'Liberation Serif';line-height:1;color:#555;transform:scaleX(0.812);transform-origin:0 0">Industrial Italic</div>
<div class="fi" style="left:723.83px;top:585.72px;font:9.86px 'Liberation Serif';line-height:1;color:#444;transform:scaleX(0.932);transform-origin:0 0">Industrial Roman</div>
<div class="fi" style="left:723.75px;top:606.79px;font:12.22px 'Liberation Serif';line-height:1;color:#444;transform:scaleX(0.922);transform-origin:0 0">Integrity Bold</div>
<div class="fi" style="left:723.84px;top:631.28px;font:10.11px 'Liberation Serif';line-height:1;color:#555;transform:scaleX(0.893);transform-origin:0 0">Integrity Medium</div>


  <!-- right panel -->
  <div class="a" style="left:808px;top:128px;width:140px;height:522px;background:#fbfbfb"></div>
  <!-- right panel contents -->
  <div class="a" style="left:808.4px;top:128px;width:130.8px;height:522px;background:#fff;border-left:1px solid #e9e9e9;border-right:1px solid #ececec"></div>
  <div class="a" style="left:808.4px;top:183.2px;width:130.8px;height:195.8px;background:#f7f7f7;border-top:1px solid #e8e8e8;border-bottom:1px solid #e8e8e8"></div>
  <div class="a" style="left:808.4px;top:154.6px;width:130.8px;height:1px;background:#ececec"></div>
  <div class="a" style="left:808.4px;top:406.2px;width:130.8px;height:1px;background:#ececec"></div>
  <div class="a" style="left:808.4px;top:434.6px;width:130.8px;height:1px;background:#ececec"></div>
  <div class="a" style="left:808.4px;top:462px;width:130.8px;height:1px;background:#ececec"></div>
  <div class="a" style="left:808.4px;top:489.8px;width:130.8px;height:1px;background:#ececec"></div>
  <div class="a" style="left:808.7px;top:207.2px;width:130.2px;height:14.5px;background:#2e5697"></div>
  <div class="a" style="left:941.3px;top:129.8px;width:4.2px;height:207.5px;background:#c4c4c4;border-radius:2.1px"></div>
  <div class="cat" style="top:196.5px">Recently Used</div>
  <div class="cat" style="top:211px;color:#eef2f8">All Fonts</div>
  <div class="cat" style="top:225.5px">Decorative + Novelty</div>
  <div class="cat" style="top:240px">Distressed</div>
  <div class="cat" style="top:254.5px">Handwriting + Calligraphy</div>
  <div class="cat" style="top:269px">International</div>
  <div class="cat" style="top:283.5px">Sans Serif</div>
  <div class="cat" style="top:298px">Sci-fi</div>
  <div class="cat" style="top:312.5px">Script</div>
  <div class="cat" style="top:327px">Serif</div>
  <div class="cat" style="top:344.5px">Symbols</div>
  <div class="cat" style="top:359px">Vintage + Retro</div>
  <div class="t" style="left:868.5px;top:138px;font-size:7.9px;color:#333">Edit text</div>
  <div class="t" style="left:836.7px;top:165.4px;font-size:7.7px;color:#333">Font</div>
  <div class="t" style="left:836.7px;top:389.6px;font-size:7.7px;color:#333">Color</div>
  <div class="t" style="left:836.7px;top:417px;font-size:7.6px;color:#333">Size</div>
  <div class="t" style="left:818px;top:445.2px;font-size:8.3px;color:#333">Justification</div>
  <div class="t" style="left:818px;top:473px;font-size:8.3px;color:#333">Scale</div>
  <div class="t" style="left:897.7px;top:417.2px;font-size:7.6px;color:#444">32.33</div>
  <svg class="a" style="left:0;top:0" width="980" height="693" viewBox="0 0 980 693">
    <path d="M821 145.3 L828.6 137.7" stroke="#1e1e1e" stroke-width="4.2" stroke-linecap="round"/>
    <path d="M827 136.2 L830.2 139.4" stroke="#fff" stroke-width="0.7"/>
    <circle cx="821.2" cy="145" r="0.9" fill="#fff"/>
    <path d="M820.8 166 H829.1 M824.95 166 V174.2" stroke="#222" stroke-width="1.4"/>
    <path d="M829.7 394.6 A5.1 5.1 0 1 0 826.6 398 Q825.6 396.6 826.6 395.4 Q827.8 394.2 829.7 394.6 Z" fill="#1e1e1e"/>
    <circle cx="822.4" cy="391.6" r="0.8" fill="#fff"/><circle cx="825" cy="390.4" r="0.8" fill="#fff"/><circle cx="827.4" cy="392" r="0.8" fill="#fff"/><circle cx="823.4" cy="394.6" r="0.8" fill="#fff"/>
    <path d="M822 417.4 H829.5 M825.75 417.4 V425.5 M820 421.8 H823.6 M821.8 421.8 V425.5" stroke="#222" stroke-width="1.5"/>
    <rect x="894.6" y="384.8" width="35" height="16.6" fill="#fff" stroke="#e6e6e6" stroke-width="0.8"/>
    <rect x="897.7" y="387.6" width="29" height="11.3" fill="#000"/>
    <rect x="894.6" y="412.9" width="35" height="16.4" fill="none" stroke="#dcdcdc" stroke-width="0.8"/>
    <rect x="867.8" y="440.2" width="17.5" height="17.5" rx="1.5" fill="#2f5597"/>
    <path d="M872.2 445.4 H878.6 M872.2 448.9 H880.8 M872.2 452.6 H878.6" stroke="#f2f5fa" stroke-width="1.7" stroke-linecap="round"/>
    <rect x="890.3" y="440.4" width="17" height="17.2" rx="1.2" fill="#fff" stroke="#dedede" stroke-width="0.8"/>
    <path d="M895.5 445.4 H902 M894.3 448.9 H903.2 M895.5 452.6 H902" stroke="#2a2a2a" stroke-width="1.7" stroke-linecap="round"/>
    <rect x="912.3" y="440.4" width="17" height="17.2" rx="1.2" fill="#fff" stroke="#dedede" stroke-width="0.8"/>
    <path d="M918.9 445.4 H925.3 M916.3 448.9 H925.3 M918.9 452.6 H925.3" stroke="#2a2a2a" stroke-width="1.7" stroke-linecap="round"/>
    <rect x="849.2" y="468.4" width="17.3" height="17" rx="1.2" fill="#fff" stroke="#dedede" stroke-width="0.8"/>
    <path d="M854.5 476.9 H861.2" stroke="#333" stroke-width="1.4"/>
    <rect x="871.5" y="468.4" width="17.1" height="17" rx="1.2" fill="#fff" stroke="#dedede" stroke-width="0.8"/>
    <path d="M876.6 477 H883.2 M879.9 473.7 V480.3" stroke="#333" stroke-width="1.4"/>
    <rect x="849.2" y="494.5" width="17.3" height="10" rx="1.2" fill="#fff" stroke="#dedede" stroke-width="0.8"/>
    <rect x="871.5" y="494.5" width="17.1" height="10" rx="1.2" fill="#fff" stroke="#dedede" stroke-width="0.8"/>
    <rect x="894" y="494.5" width="35.5" height="10" rx="1.2" fill="#fff" stroke="#dedede" stroke-width="0.8"/>
  </svg>


  <!-- preview -->
  <div class="a" style="left:813.6px;top:498.8px;width:128.4px;height:145.5px;background:#fff;box-shadow:0 0 2px rgba(0,0,0,0.25)"></div>
  <div class="a" style="left:815px;top:516px;width:126.5px;height:117.6px;background:#efefef"></div>
  <div class="a" style="left:815px;top:633.6px;width:126.5px;height:10.4px;background:#f8f8f8"></div>
  <div class="t" style="left:813.6px;top:504px;width:128.4px;text-align:center;font-size:7.8px;color:#444">Preview</div>
  <svg class="a" style="left:0;top:0" width="980" height="693" viewBox="0 0 980 693">
    <defs><clipPath id="pvc"><rect x="815" y="516" width="126.5" height="117.6"/></clipPath><filter id="sh" x="-20%" y="-20%" width="140%" height="140%"><feGaussianBlur stdDeviation="1"/></filter></defs>
    <path d="M820.3 507.7 H824.8" stroke="#333" stroke-width="1.3"/>
    <circle cx="933.6" cy="506.2" r="3" fill="none" stroke="#666" stroke-width="0.9"/>
    <path d="M931.4 508.4 L928.6 511.2" stroke="#666" stroke-width="1"/>
    <g clip-path="url(#pvc)"><polygon points="863.6,531 898.3,531 909.4,543.4 909.4,631.6 852.3,631.6 852.3,543.4" fill="#b8b8b8" filter="url(#sh)"/>
    <polygon points="861.6,529.7 896.3,529.7 907.6,541.9 907.6,630.2 850.3,630.2 850.3,541.9" fill="#eaeaea"/>
    <path d="M875.5 535.5 Q868.3 532 868.3 523.3 Q868.6 513.5 877.6 512.8 Q886.8 513.5 887 523.3 Q886.8 532 879.6 535.5" fill="none" stroke="#8e93a0" stroke-width="0.9"/>
    <circle cx="877.6" cy="537" r="1.3" fill="#d8d8d8"/>
    <g opacity="0.8"><use href="#art" transform="translate(760.1 495.4) scale(0.218)"/><use href="#art" transform="translate(760.5 495.7) scale(0.218)"/></g></g>
    <circle cx="868.5" cy="639.3" r="1.8" fill="none" stroke="#555" stroke-width="0.7"/>
    <circle cx="878.4" cy="639.3" r="2" fill="#222"/>
    <circle cx="887.7" cy="639.3" r="2" fill="#222"/>
  </svg>
  <div class="t" style="left:877.3px;top:160.5px;font:italic bold 18.5px 'Liberation Serif';color:#111;transform:scaleX(0.74);transform-origin:0 0">Holiday</div>
</div>
</body></html>
